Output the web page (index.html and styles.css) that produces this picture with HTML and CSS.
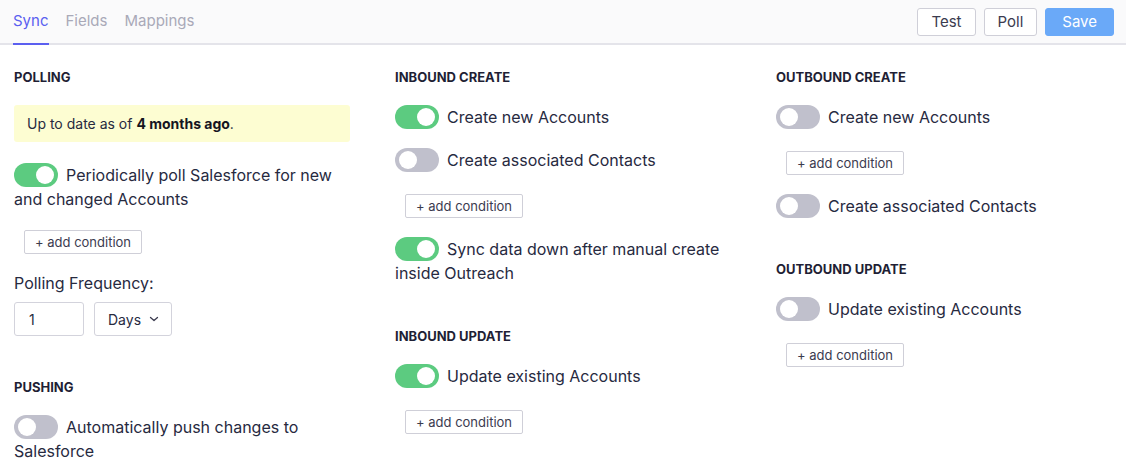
FILE: index.html
```html
<!DOCTYPE html>
<html lang="en">
<head>
    <meta charset="UTF-8">
    <meta name="viewport" content="width=device-width, initial-scale=1.0">
    <title>Sync settings</title>
    <link rel="stylesheet" href="styles.css">
</head>
<body>
    <div class="topbar">
        <div class="tabs">
            <a class="tab active">Sync</a>
            <a class="tab">Fields</a>
            <a class="tab">Mappings</a>
        </div>
        <div class="actions">
            <button class="btn">Test</button>
            <button class="btn">Poll</button>
            <button class="btn primary">Save</button>
        </div>
    </div>

    <div class="columns">
        <div class="col">
            <div class="section">
                <h3 class="heading">Polling</h3>
                <div class="notice">Up to date as of <b>4 months ago</b>.</div>
                <div class="item"><span class="toggle on"></span>Periodically poll Salesforce for new and changed Accounts</div>
                <button class="cond cond-tight">+ add condition</button>
                <div class="freq-label">Polling Frequency:</div>
                <div class="freq">
                    <input class="num" type="text" value="1">
                    <div class="select">Days
                        <svg width="10" height="6" viewBox="0 0 10 6"><polyline points="1.5 1.5 5 4.5 8.5 1.5"></polyline></svg>
                    </div>
                </div>
            </div>
            <div class="section">
                <h3 class="heading">Pushing</h3>
                <div class="item"><span class="toggle"></span>Automatically push changes to Salesforce</div>
            </div>
        </div>

        <div class="col">
            <div class="section">
                <h3 class="heading">Inbound Create</h3>
                <div class="item"><span class="toggle on"></span>Create new Accounts</div>
                <div class="item"><span class="toggle"></span>Create associated Contacts</div>
                <button class="cond">+ add condition</button>
                <div class="item"><span class="toggle on"></span>Sync data down after manual create inside Outreach</div>
            </div>
            <div class="section">
                <h3 class="heading">Inbound Update</h3>
                <div class="item"><span class="toggle on"></span>Update existing Accounts</div>
                <button class="cond">+ add condition</button>
            </div>
        </div>

        <div class="col">
            <div class="section">
                <h3 class="heading">Outbound Create</h3>
                <div class="item"><span class="toggle"></span>Create new Accounts</div>
                <button class="cond">+ add condition</button>
                <div class="item"><span class="toggle"></span>Create associated Contacts</div>
            </div>
            <div class="section">
                <h3 class="heading">Outbound Update</h3>
                <div class="item"><span class="toggle"></span>Update existing Accounts</div>
                <button class="cond">+ add condition</button>
            </div>
        </div>
    </div>
</body>
</html>
```

FILE: styles.css
```css
body{
    margin: 0;
    font-family: Inter, "Liberation Sans", sans-serif;
    color: #272a3f;
    background: #fff;
}
.topbar{
    display: flex;
    justify-content: space-between;
    align-items: center;
    height: 43px;
    padding: 0 12px 0 13px;
    background: #fafafb;
    border-bottom: 2px solid #e4e4ea;
}
.tabs{
    display: flex;
    gap: 17px;
    height: 100%;
}
.tab{
    position: relative;
    display: flex;
    align-items: center;
    font-size: 15px;
    color: #a9a9b8;
    padding-bottom: 2px;
}
.tab.active{
    color: #5b5ff0;
}
.tab.active:after{
    content: "";
    position: absolute;
    left: 0;
    right: 0;
    bottom: -2px;
    height: 2px;
    background: #5b5ff0;
}
.actions{
    display: flex;
    gap: 8px;
}
.btn{
    height: 28px;
    padding: 0 13px;
    font-family: inherit;
    font-size: 15px;
    color: #3b3b4f;
    background: #fff;
    border: 1.5px solid #cfcfd8;
    border-radius: 3px;
}
.btn.primary{
    color: #fff;
    background: #6aa9f8;
    border-color: #6aa9f8;
    padding: 0 16px;
}

.columns{
    display: grid;
    grid-template-columns: repeat(3, 1fr);
    gap: 45px;
    padding: 24px 14px 0;
}
.section{
    margin-bottom: 43px;
}
.heading{
    margin: 0 0 20px;
    font-size: 13px;
    line-height: 16px;
    font-weight: 700;
    text-transform: uppercase;
    color: #1f1f35;
}
.notice{
    margin-bottom: 21px;
    padding: 0 13px;
    height: 37px;
    line-height: 37px;
    font-size: 14px;
    background: #fdfdd2;
    border-radius: 3px;
}
.notice b{
    font-weight: 700;
    color: #15151f;
}
.item{
    margin-bottom: 19px;
    font-size: 16px;
    line-height: 24px;
}
.section .item:last-child{
    margin-bottom: 0;
}
.toggle{
    display: inline-block;
    position: relative;
    width: 44px;
    height: 24px;
    margin-right: 8px;
    vertical-align: top;
    border-radius: 12px;
    background: #c0c0cc;
}
.toggle:after{
    content: "";
    position: absolute;
    top: 3px;
    left: 4px;
    width: 18px;
    height: 18px;
    border-radius: 50%;
    background: #fff;
}
.toggle.on{
    background: #5ccb80;
}
.toggle.on:after{
    left: auto;
    right: 4px;
}
.cond{
    display: block;
    height: 24px;
    margin: 22px 0 19px 10px;
    padding: 0 10px;
    font-family: inherit;
    font-size: 13px;
    color: #3b3b4f;
    background: #fff;
    border: 1.5px solid #cfcfd8;
    border-radius: 2px;
}
.cond-tight{
    margin-top: 19px;
}
.section .cond:last-child{
    margin-bottom: 0;
}
.freq-label{
    font-size: 16px;
    line-height: 20px;
    margin-bottom: 9px;
}
.freq{
    display: flex;
    gap: 10px;
}
.num{
    width: 70px;
    height: 34px;
    box-sizing: border-box;
    padding: 0 14px;
    font-family: inherit;
    font-size: 14px;
    color: #272a3f;
    border: 1.5px solid #d3d3dc;
    border-radius: 3px;
}
.select{
    display: flex;
    align-items: center;
    gap: 8px;
    height: 34px;
    box-sizing: border-box;
    padding: 0 12px 0 13px;
    font-size: 14px;
    border: 1.5px solid #d3d3dc;
    border-radius: 3px;
}
.select svg{
    fill: none;
    stroke: #3b3b4f;
    stroke-width: 1.3;
    stroke-linecap: round;
    stroke-linejoin: round;
}
```
